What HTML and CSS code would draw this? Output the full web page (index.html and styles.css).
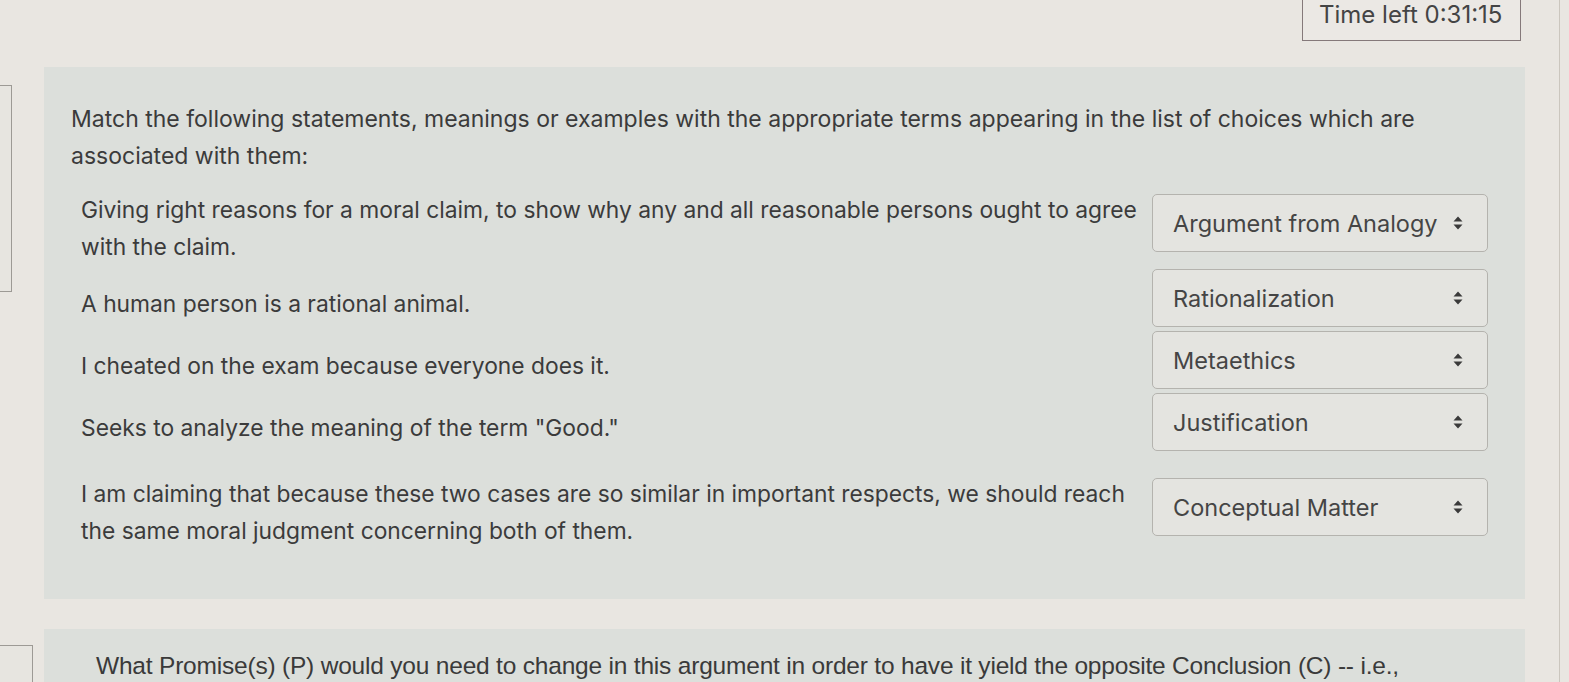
FILE: index.html
```html
<!DOCTYPE html>
<html lang="en">
<head>
<meta charset="utf-8">
<title>Quiz</title>
<link rel="stylesheet" href="styles.css">
</head>
<body>
<div class="page">
  <header class="topbar">
    <div class="timer">Time left 0:31:15</div>
  </header>

  <section class="question">
    <div class="qinfo"></div>
    <div class="panel">
      <p class="prompt">Match the following statements, meanings or examples with the appropriate terms appearing in the list of choices which are associated with them:</p>
      <div class="rows">
        <div class="row">
          <div class="stem">Giving right reasons for a moral claim, to show why any and all reasonable persons ought to agree with the claim.</div>
          <div class="select"><span>Argument from Analogy</span><svg class="arrows" viewBox="0 0 10 14" width="10" height="14"><path d="M5 0.5 L9.5 5.5 H0.5 Z M5 13.5 L9.5 8.5 H0.5 Z"/></svg></div>
        </div>
        <div class="row">
          <div class="stem">A human person is a rational animal.</div>
          <div class="select"><span>Rationalization</span><svg class="arrows" viewBox="0 0 10 14" width="10" height="14"><path d="M5 0.5 L9.5 5.5 H0.5 Z M5 13.5 L9.5 8.5 H0.5 Z"/></svg></div>
        </div>
        <div class="row">
          <div class="stem">I cheated on the exam because everyone does it.</div>
          <div class="select"><span>Metaethics</span><svg class="arrows" viewBox="0 0 10 14" width="10" height="14"><path d="M5 0.5 L9.5 5.5 H0.5 Z M5 13.5 L9.5 8.5 H0.5 Z"/></svg></div>
        </div>
        <div class="row">
          <div class="stem">Seeks to analyze the meaning of the term "Good."</div>
          <div class="select"><span>Justification</span><svg class="arrows" viewBox="0 0 10 14" width="10" height="14"><path d="M5 0.5 L9.5 5.5 H0.5 Z M5 13.5 L9.5 8.5 H0.5 Z"/></svg></div>
        </div>
        <div class="row row-last">
          <div class="stem">I am claiming that because these two cases are so similar in important respects, we should reach the same moral judgment concerning both of them.</div>
          <div class="select"><span>Conceptual Matter</span><svg class="arrows" viewBox="0 0 10 14" width="10" height="14"><path d="M5 0.5 L9.5 5.5 H0.5 Z M5 13.5 L9.5 8.5 H0.5 Z"/></svg></div>
        </div>
      </div>
    </div>
  </section>

  <section class="question question-next">
    <div class="qinfo qinfo-wide"></div>
    <div class="panel panel-next">
      <p class="prompt2">What Promise(s) (P) would you need to change in this argument in order to have it yield the opposite Conclusion (C) -- i.e.,</p>
    </div>
  </section>
</div>
</body>
</html>
```

FILE: styles.css
```css
html, body {
  margin: 0;
  padding: 0;
}

body {
  background: #e9e6e1;
  font-family: Inter, "Noto Sans", "Liberation Sans", sans-serif;
  color: #3d3d3c;
  overflow: hidden;
}

.page {
  width: 1559px;
  height: 682px;
  border-right: 1px solid #cbc6be;
  overflow: hidden;
}

.topbar {
  display: flex;
  justify-content: flex-end;
  padding-right: 38px;
}

.timer {
  box-sizing: border-box;
  width: 219px;
  height: 42px;
  margin-top: -1px;
  padding-left: 16px;
  border: 1px solid #85797a;
  border-top: none;
  font-size: 24px;
  line-height: 32px;
  color: #444;
  background: #ebe8e4;
}

.question {
  display: flex;
  align-items: flex-start;
  margin-top: 26px;
}

.qinfo {
  flex: none;
  width: 12px;
  height: 205px;
  margin-top: 18px;
  margin-left: -1px;
  border: 1px solid #9d9a95;
  border-left: none;
  background: #e7e5e0;
}

.panel {
  flex: none;
  box-sizing: border-box;
  width: 1481px;
  margin-left: 32px;
  padding: 34px 37px 50px 27px;
  background: #dcdfdb;
}

.prompt {
  margin: 0;
  font-size: 23px;
  line-height: 37px;
  color: #3b3b3b;
}

.rows {
  display: flex;
  flex-direction: column;
  gap: 4px;
  margin-top: 6px;
  padding-left: 10px;
}

.row {
  display: flex;
  align-items: center;
  justify-content: space-between;
  min-height: 58px;
}

.row.row-last {
  margin-top: 10px;
}

.stem {
  width: 1062px;
  padding-top: 10px;
  font-size: 22.8px;
  line-height: 37px;
  color: #3b3b3b;
}

.select {
  box-sizing: border-box;
  flex: none;
  display: flex;
  align-items: center;
  justify-content: space-between;
  width: 336px;
  height: 58px;
  padding: 0 24px 0 20px;
  border: 1px solid #b4b3ae;
  border-radius: 5px;
  background: #e4e4e0;
  font-size: 23.5px;
  color: #454545;
}

.arrows {
  fill: #3a3a3a;
  flex: none;
}

.question-next {
  margin-top: 30px;
}

.qinfo-wide {
  width: 33px;
  height: 80px;
  margin-top: 16px;
}

.panel-next {
  margin-left: 11px;
  height: 80px;
  padding: 22px 37px 0 52px;
}

.prompt2 {
  margin: 0;
  font-family: "Liberation Sans", Arial, sans-serif;
  font-size: 24.5px;
  line-height: 30px;
  color: #3a3a3a;
  letter-spacing: -0.2px;
}
```
